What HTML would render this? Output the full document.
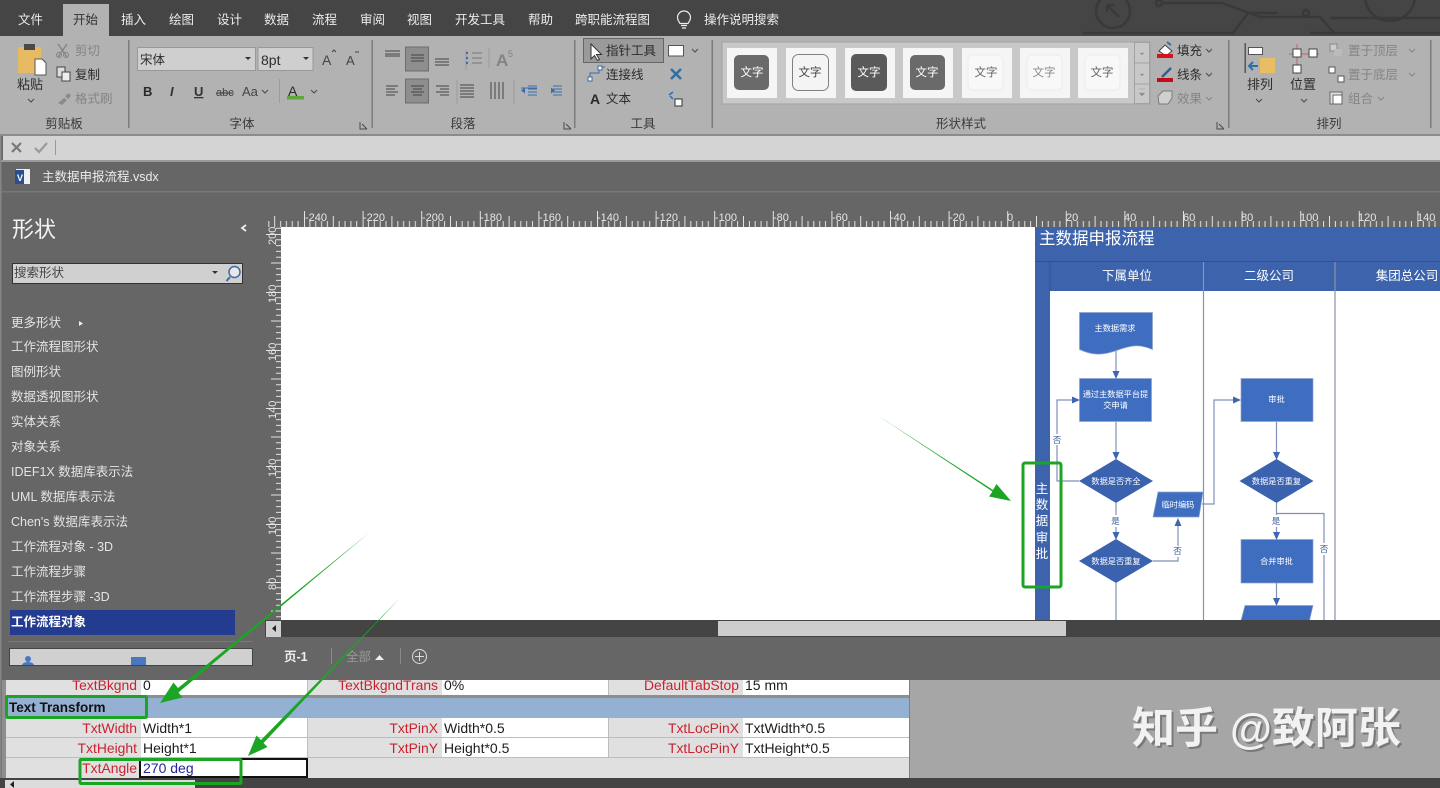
<!DOCTYPE html>
<html lang="zh">
<head>
<meta charset="utf-8">
<title>主数据申报流程.vsdx</title>
<style>
html,body{margin:0;padding:0;background:#666;width:1440px;height:788px;overflow:hidden}
svg{display:block;filter:blur(.3px)}
text{font-family:"Liberation Sans","Noto Sans CJK SC",sans-serif}
.tab{font-size:12.5px;fill:#ececec}
.rb{font-size:12.5px;fill:#2c2c2c}
.dis{font-size:12.5px;fill:#858585}
.grp{font-size:12.5px;fill:#3a3a3a;text-anchor:middle}
.side{font-size:12.5px;fill:#e4e4e4}
.rul{font-size:11px;fill:#e8e8e8}
.lab{font-size:13.9px;fill:#c9232f;text-anchor:end}
.val{font-size:14px;fill:#1c1c1c}
.fc{font-size:8.2px;fill:#fff;text-anchor:middle}
.yn{font-size:8.5px;fill:#3f5f9f;text-anchor:middle}
.hd{font-size:12.5px;fill:#fff;text-anchor:middle}
.st{font-size:11.5px;text-anchor:middle}
.ic{fill:none;stroke:#4a4a4a;stroke-width:1}
</style>
</head>
<body>
<svg width="1440" height="788" viewBox="0 0 1440 788" xmlns="http://www.w3.org/2000/svg">
<defs>
<pattern id="rh" x="304" y="210" width="58.6" height="17" patternUnits="userSpaceOnUse">
<path d="M.5 1V17M5.9 11V17M11.7 11V17M17.6 11V17M23.4 11V17M29.3 6V17M35.2 11V17M41 11V17M46.9 11V17M52.7 11V17" stroke="#e2e2e2" stroke-width="1" fill="none"/>
</pattern>
<pattern id="rv" x="265" y="234" width="17" height="58" patternUnits="userSpaceOnUse">
<path d="M1 .5H17M11 5.8H17M11 11.6H17M11 17.4H17M11 23.2H17M6 29H17M11 34.8H17M11 40.6H17M11 46.4H17M11 52.2H17" stroke="#e2e2e2" stroke-width="1" fill="none"/>
</pattern>
</defs>

<!-- backgrounds -->
<rect width="1440" height="788" fill="#666"/>
<rect width="1440" height="36" fill="#454545"/>
<!-- circuit decoration -->
<g fill="none" stroke="#393939" stroke-width="2.5">
<circle cx="1113" cy="11" r="17"/><path d="M1107 5l12 12M1107 5h7M1107 5v7"/>
<circle cx="1159" cy="3" r="3"/><path d="M1162 3h60l38 14h60l15 17"/>
<path d="M1083 33h150l15-20h30"/><circle cx="1306" cy="13" r="3"/>
<circle cx="1390" cy="-4" r="25"/><path d="M1330 18h110M1310 33h130"/>
</g>
<rect x="0" y="36" width="1440" height="99" fill="#b2b2b2"/>
<rect x="63" y="4" width="46" height="32" fill="#b2b2b2"/>
<rect y="134" width="1440" height="2" fill="#8c8c8c"/>
<rect x="3" y="136" width="1437" height="24" fill="#d4d4d4"/>
<rect y="160" width="1440" height="2" fill="#999"/>
<rect y="191" width="1440" height="1.500" fill="#787878"/>
<rect x="0" y="136" width="1.5" height="652" fill="#858585"/>

<!-- tabs -->
<text class="tab" x="18" y="24">文件</text>
<text class="tab" x="73" y="24" style="fill:#333">开始</text>
<text class="tab" x="121" y="24">插入</text>
<text class="tab" x="169" y="24">绘图</text>
<text class="tab" x="217" y="24">设计</text>
<text class="tab" x="264" y="24">数据</text>
<text class="tab" x="312" y="24">流程</text>
<text class="tab" x="360" y="24">审阅</text>
<text class="tab" x="407" y="24">视图</text>
<text class="tab" x="455" y="24">开发工具</text>
<text class="tab" x="528" y="24">帮助</text>
<text class="tab" x="575" y="24">跨职能流程图</text>
<path d="M680 23.5c-1-2-2.500-3-2.500-6a6.500 6.500 0 0 1 13 0c0 3-1.500 4-2.500 6zM681 25.500h6M682 28h4" fill="none" stroke="#eee" stroke-width="1.200"/>
<text class="tab" x="704" y="24">操作说明搜索</text>

<!-- ribbon separators -->
<g fill="#7c7c7c">
<rect x="128" y="40" width="1.500" height="88"/><rect x="371.500" y="40" width="1.500" height="88"/>
<rect x="574" y="40" width="1.500" height="88"/><rect x="711.500" y="40" width="1.500" height="88"/>
<rect x="1228" y="40" width="1.500" height="88"/><rect x="1430" y="40" width="1.500" height="88"/>
</g>
<text class="grp" x="64" y="128">剪贴板</text>
<text class="grp" x="242" y="128">字体</text>
<text class="grp" x="463" y="128">段落</text>
<text class="grp" x="643" y="128">工具</text>
<text class="grp" x="961" y="128">形状样式</text>
<text class="grp" x="1329" y="128">排列</text>
<g class="ic"><path d="M360 122v7h7M362 124l5 5"/><path d="M564 122v7h7M566 124l5 5" /><path d="M1217 122v7h7M1219 124l5 5"/></g>

<!-- clipboard -->
<rect x="18" y="47" width="23" height="26" fill="#e6bb64"/>
<rect x="24" y="44" width="11" height="6" fill="#4a4a4a"/>
<path d="M35 59h7l4 4v12H35z" fill="#fff" stroke="#555"/>
<text class="rb" x="17" y="89" style="font-size:13px">粘贴</text>
<path d="M28 99l3 3 3-3" class="ic"/>
<path d="M58 44l9 13M67 44l-9 13" stroke="#858585" stroke-width="1.500" fill="none"/><circle cx="59" cy="55" r="2.500" fill="none" stroke="#858585"/><circle cx="66" cy="55" r="2.500" fill="none" stroke="#858585"/>
<text class="dis" x="75" y="55">剪切</text>
<rect x="57" y="67" width="8" height="10" fill="#ddd" stroke="#444"/><rect x="62" y="72" width="8" height="9" fill="#eee" stroke="#444"/>
<text class="rb" x="75" y="79">复制</text>
<path d="M58 103l6-5 3 2-5 5zM65 96l4-3 2 3-3 3z" fill="#8a8a8a"/>
<text class="dis" x="75" y="103">格式刷</text>

<!-- font -->
<rect x="137.500" y="47.500" width="118" height="23" fill="#cfcfcf" stroke="#999"/>
<rect x="258" y="47.500" width="55" height="23" fill="#cfcfcf" stroke="#999"/>
<text class="rb" x="140" y="64">宋体</text>
<text class="rb" x="261" y="65" style="font-size:14px">8pt</text>
<path d="M245 57h6l-3 3zM303 57h6l-3 3z" fill="#333"/>
<text x="322" y="65" style="font-size:14px;fill:#444">A</text><path d="M332 52l2-2 2 2" fill="none" stroke="#444"/>
<text x="346" y="65" style="font-size:13px;fill:#444">A</text><path d="M355 52h4" stroke="#444"/>
<text x="143" y="96" style="font-size:13px;font-weight:bold;fill:#2a2a2a">B</text>
<text x="170" y="96" style="font-size:13px;font-style:italic;font-weight:bold;fill:#333">I</text>
<text x="194" y="96" style="font-size:13px;font-weight:bold;fill:#333;text-decoration:underline">U</text>
<text x="216" y="96" style="font-size:11px;fill:#444;text-decoration:line-through">abc</text>
<text x="242" y="96" style="font-size:13px;fill:#444">Aa</text>
<path d="M262 90l3 3 3-3M311 90l3 3 3-3" class="ic"/>
<rect x="279" y="79" width="1" height="24" fill="#9c9c9c"/>
<text x="288" y="96" style="font-size:14px;fill:#2a2a2a">A</text>
<rect x="287" y="96" width="17" height="3.500" fill="#5ea83b"/>

<!-- paragraph -->
<rect x="405.500" y="47" width="23" height="24" fill="#8e8e8e" stroke="#6c6c6c"/>
<rect x="405.500" y="79" width="23" height="24" fill="#8e8e8e" stroke="#6c6c6c"/>
<g stroke="#444" stroke-width="1" fill="none">
<path d="M385 51h15M385 54h15M385 56h15"/>
<path d="M411 55h13M411 58h13M411 61h13"/>
<path d="M435 59h14M435 62h14M435 65h14"/>
<path d="M386 86h12M386 89h9M386 92h12M386 95h9"/>
<path d="M411 86h13M413 89h9M411 92h13M413 95h9"/>
<path d="M436 86h13M440 89h9M436 92h13M440 95h9"/>
<path d="M460 85h14M460 88h14M460 91h14M460 94h14M460 97h14"/>
<path d="M472 53h10M472 58h10M472 63h10" stroke="#777"/>
<path d="M491 82v17M495 82v17M499 82v17M503 82v17"/>
<path d="M528 86h9M528 89h9M528 92h9M528 95h9M521 88h16" stroke="#3b6ea8"/>
<path d="M553 86h9M553 89h9M553 92h9M553 95h9" stroke="#3b6ea8"/>
<path d="M466 50v20M489 48v20M457 80v24M514 80v24" stroke="#9c9c9c"/>
</g>
<g fill="#3b6ea8"><circle cx="467" cy="53" r="1.200"/><circle cx="467" cy="58" r="1.200"/><circle cx="467" cy="63" r="1.200"/><path d="M521 90.500l4-3v6zM551 87.500l4 3-4 3z"/></g>
<text x="496" y="66" style="font-size:17px;font-weight:bold;fill:#838383">A</text>
<text x="508" y="57" style="font-size:9px;fill:#838383">5</text>

<!-- tools -->
<rect x="583.500" y="38.500" width="80" height="24" fill="#9a9a9a" stroke="#666"/>
<path d="M591 44v15l3.500-3.500 3 5 2-1-3-5h5z" fill="#fff" stroke="#333"/>
<text class="rb" x="606" y="55">指针工具</text>
<rect x="668.500" y="45.500" width="15" height="10.500" fill="#fff" stroke="#555"/>
<path d="M692 49l3 3 3-3" class="ic"/>
<path d="M590 77v-4h9v-6h6" fill="none" stroke="#3a6ba5" stroke-width="1"/><rect x="588" y="77" width="4" height="4" fill="#fff" stroke="#3a6ba5"/><rect x="598" y="66" width="4" height="4" fill="#fff" stroke="#3a6ba5"/>
<text class="rb" x="606" y="79">连接线</text>
<path d="M671 69l10 10M681 69l-10 10" stroke="#2f6ea8" stroke-width="2.500"/>
<text x="590" y="104" style="font-size:14px;font-weight:bold;fill:#2a2a2a">A</text>
<text class="rb" x="606" y="103">文本</text>
<path d="M669 95l4-3M673 99l-3-3" stroke="#2f6ea8" stroke-width="1.500" fill="none"/><rect x="675" y="99" width="7" height="7" fill="#fff" stroke="#333"/>

<!-- gallery -->
<rect x="722" y="42" width="428" height="62" fill="#c8c8c8" stroke="#a2a2a2"/>
<rect x="1134.500" y="42.500" width="15" height="61" fill="#c8c8c8" stroke="#a2a2a2"/>
<path d="M1135 63h14M1135 84h14" stroke="#a2a2a2"/>
<path d="M1140 53h4l-2 2zM1140 74h4l-2 2zM1139 93h6l-3 3zM1139 89h6" fill="#888" stroke="#999" stroke-width=".5"/>
<g fill="#f5f5f5">
<rect x="727" y="48" width="50" height="50"/><rect x="786" y="48" width="50" height="50"/><rect x="845" y="48" width="50" height="50"/><rect x="903" y="48" width="50" height="50"/><rect x="962" y="48" width="50" height="50"/><rect x="1020" y="48" width="50" height="50"/><rect x="1078" y="48" width="50" height="50"/>
</g>
<rect x="734" y="55" width="35" height="35" rx="5" fill="#6a6a6a"/>
<rect x="792.500" y="54.500" width="36" height="36" rx="6" fill="#f4f4f4" stroke="#808080"/>
<rect x="851" y="54" width="36" height="37" rx="5" fill="#5a5a5a"/>
<rect x="910" y="55" width="35" height="35" rx="5" fill="#6a6a6a"/>
<g fill="#f8f8f8" stroke="#ececec"><rect x="968" y="55" width="35" height="35" rx="5"/><rect x="1027" y="55" width="35" height="35" rx="5"/><rect x="1085" y="55" width="35" height="35" rx="5"/></g>
<text class="st" x="752" y="76" fill="#fff">文字</text>
<text class="st" x="810" y="76" fill="#444">文字</text>
<text class="st" x="869" y="76" fill="#fff">文字</text>
<text class="st" x="927" y="76" fill="#fff">文字</text>
<text class="st" x="986" y="76" fill="#666">文字</text>
<text class="st" x="1044" y="76" fill="#8c8c8c">文字</text>
<text class="st" x="1102" y="76" fill="#666">文字</text>

<!-- fill line effect -->
<path d="M1159 51l6-6 7 6-6 5z" fill="#fff" stroke="#444"/><path d="M1167 42l4 3" stroke="#2f6ea8" stroke-width="2"/>
<rect x="1157" y="54" width="16" height="4" fill="#d8101a"/>
<text class="rb" x="1177" y="55">填充</text><path d="M1206 49l3 3 3-3" class="ic"/>
<path d="M1162 77l9-9" stroke="#2f5f9a" stroke-width="2.500"/>
<rect x="1157" y="78" width="16" height="4" fill="#c00d18"/>
<text class="rb" x="1177" y="79">线条</text><path d="M1206 73l3 3 3-3" class="ic"/>
<path d="M1158 96l5-5h9v7l-4 6h-9z" fill="#d0d0d0" stroke="#7a7a7a"/>
<text class="dis" x="1177" y="103">效果</text><path d="M1206 97l3 3 3-3" class="ic" style="stroke:#858585"/>

<!-- arrange -->
<rect x="1244.500" y="43" width="1.500" height="30" fill="#555"/>
<rect x="1248.500" y="47.500" width="14" height="7" fill="#fff" stroke="#555"/>
<rect x="1260" y="58" width="15" height="15" fill="#e9bd62"/>
<path d="M1258 66h-9M1253 62l-4 4 4 4" stroke="#2f6ea8" stroke-width="2" fill="none"/>
<text class="rb" x="1247" y="89" style="font-size:13px">排列</text>
<path d="M1256 99l3 3 3-3" class="ic"/>
<path d="M1289 54h30M1297 44v30" stroke="#b96a60" fill="none"/>
<rect x="1293" y="49" width="8" height="8" fill="#fff" stroke="#444"/><rect x="1309" y="49" width="8" height="8" fill="#fff" stroke="#444"/><rect x="1293" y="65" width="8" height="8" fill="#fff" stroke="#444"/>
<text class="rb" x="1290" y="89" style="font-size:13px">位置</text>
<path d="M1301 99l3 3 3-3" class="ic"/>
<rect x="1330" y="44" width="7" height="7" fill="#ccc" stroke="#888"/><rect x="1334" y="49" width="8" height="7" fill="#bbb"/>
<text class="dis" x="1348" y="55">置于顶层</text><path d="M1409 49l3 3 3-3" class="ic" style="stroke:#858585"/>
<rect x="1329" y="67" width="6" height="6" fill="#fff" stroke="#555"/><rect x="1338" y="76" width="6" height="6" fill="#fff" stroke="#555"/>
<text class="dis" x="1348" y="79">置于底层</text><path d="M1409 73l3 3 3-3" class="ic" style="stroke:#858585"/>
<rect x="1330" y="92" width="12" height="12" fill="#e0e0e0" stroke="#666"/><rect x="1333" y="95" width="9" height="9" fill="#fff" stroke="#666"/>
<text class="dis" x="1348" y="103">组合</text><path d="M1378 97l3 3 3-3" class="ic" style="stroke:#858585"/>

<!-- formula bar -->
<path d="M12 143l9 9M21 143l-9 9" stroke="#777" stroke-width="2.200"/>
<path d="M35 148l4 4 8-9" stroke="#999" stroke-width="2.200" fill="none"/>
<rect x="55" y="140" width="1" height="15" fill="#999"/>

<!-- doc title -->
<rect x="16" y="169" width="14" height="15" fill="#f0f0f0"/><rect x="15" y="170" width="9" height="14" fill="#2a4f8f"/>
<text x="17" y="181" style="font-size:9px;fill:#fff;font-weight:bold">V</text>
<text x="42" y="181" style="font-size:12.5px;fill:#ececec">主数据申报流程.vsdx</text>

<!-- sidebar -->
<text x="12" y="237" style="font-size:22px;fill:#f2f2f2">形状</text>
<path d="M246 225l-4 3 4 3" stroke="#eee" stroke-width="1.800" fill="none"/>
<rect x="12.500" y="263.500" width="230" height="20" fill="#d0d0d0" stroke="#333"/>
<text x="14" y="277" style="font-size:12.500px;fill:#444">搜索形状</text>
<path d="M212 271h6l-3 3z" fill="#333"/>
<circle cx="234.500" cy="272" r="5.500" fill="#e8e8e8" stroke="#3a6ba5" stroke-width="1.500"/><path d="M230 277l-3.500 4" stroke="#3a6ba5" stroke-width="2"/>
<text class="side" x="11" y="327">更多形状</text><path d="M79 321l4 2.500-4 2.500z" fill="#eee"/>
<text class="side" x="11" y="351">工作流程图形状</text>
<text class="side" x="11" y="376">图例形状</text>
<text class="side" x="11" y="401">数据透视图形状</text>
<text class="side" x="11" y="426">实体关系</text>
<text class="side" x="11" y="451">对象关系</text>
<text class="side" x="11" y="476">IDEF1X 数据库表示法</text>
<text class="side" x="11" y="501">UML 数据库表示法</text>
<text class="side" x="11" y="526">Chen's 数据库表示法</text>
<text class="side" x="11" y="551">工作流程对象 - 3D</text>
<text class="side" x="11" y="576">工作流程步骤</text>
<text class="side" x="11" y="601">工作流程步骤 -3D</text>
<rect x="10" y="610" width="225" height="25" fill="#243c90"/>
<text x="11" y="626" style="font-size:12.500px;font-weight:bold;fill:#fff">工作流程对象</text>
<rect x="8" y="641" width="245" height="1" fill="#7a7a7a"/>
<rect x="9.500" y="648.500" width="243" height="17" fill="#d0d0d0" stroke="#444"/>
<circle cx="28" cy="659" r="3" fill="#4a78c0"/><path d="M22 665c1-4 11-4 12 0z" fill="#4a78c0"/>
<rect x="131" y="657" width="15" height="8" fill="#4a78c0"/>

<!-- rulers -->
<rect x="265" y="210" width="1175" height="17" fill="#666"/>
<rect x="265" y="210" width="1175" height="17" fill="url(#rh)"/>
<rect x="265" y="227" width="16" height="393" fill="#666"/>
<rect x="265" y="227" width="16" height="393" fill="url(#rv)"/>
<g class="rul">
<text class="rul" x="305" y="221">-240</text><text class="rul" x="363" y="221">-220</text><text class="rul" x="422" y="221">-200</text><text class="rul" x="480" y="221">-180</text><text class="rul" x="539" y="221">-160</text><text class="rul" x="597" y="221">-140</text><text class="rul" x="656" y="221">-120</text><text class="rul" x="715" y="221">-100</text><text class="rul" x="773" y="221">-80</text><text class="rul" x="832" y="221">-60</text><text class="rul" x="890" y="221">-40</text><text class="rul" x="949" y="221">-20</text><text class="rul" x="1007" y="221">0</text><text class="rul" x="1066" y="221">20</text><text class="rul" x="1124" y="221">40</text><text class="rul" x="1183" y="221">60</text><text class="rul" x="1241" y="221">80</text><text class="rul" x="1300" y="221">100</text><text class="rul" x="1358" y="221">120</text><text class="rul" x="1417" y="221">140</text>
<text class="rul" transform="translate(276,245) rotate(-90)">200</text>
<text class="rul" transform="translate(276,303) rotate(-90)">180</text>
<text class="rul" transform="translate(276,361) rotate(-90)">160</text>
<text class="rul" transform="translate(276,419) rotate(-90)">140</text>
<text class="rul" transform="translate(276,477) rotate(-90)">120</text>
<text class="rul" transform="translate(276,535) rotate(-90)">100</text>
<text class="rul" transform="translate(276,590) rotate(-90)">80</text>
</g>

<!-- canvas -->
<rect x="281" y="227" width="1159" height="393" fill="#fff"/>
<rect x="1035" y="227" width="405" height="64" fill="#3c63ac"/>
<rect x="1035" y="227" width="15" height="393" fill="#3c63ac"/>
<rect x="1035" y="261" width="405" height="1" fill="#33528f"/>
<rect x="1049.500" y="262" width="1" height="29" fill="#33528f"/>
<path d="M1203.500 262V620M1335 262V620" stroke="#8a94a6" stroke-width="1.200"/>
<text x="1039" y="244" style="font-size:16.500px;fill:#fff">主数据申报流程</text>
<text class="hd" x="1127" y="280">下属单位</text>
<text class="hd" x="1269" y="280">二级公司</text>
<text class="hd" x="1407" y="280">集团总公司</text>

<g fill="#3f6ec0" stroke="#8fa3c9" stroke-width=".7">
<path d="M1079.500 312.500h73v37c-14-6-22-4-36 1s-24 5-37-1z"/>
<rect x="1079.500" y="378.500" width="72" height="43"/>
<rect x="1241" y="378.500" width="72" height="43"/>
<rect x="1241" y="539.500" width="72" height="43.500"/>
<path d="M1158 492h45l-4 25h-46z"/>
<path d="M1245 605.500h68l-3.500 15h-68.500z"/>
</g>
<g fill="#3a62ae">
<path d="M1116 459l37 22-37 22-37-22z"/>
<path d="M1116 539l37 22-37 22-37-22z"/>
<path d="M1276.500 459l37 22-37 22-37-22z"/>
</g>
<g fill="none" stroke="#7f91b8" stroke-width="1.200">
<path d="M1116 351V372M1116 422V453M1116 503V515M1116 527V533M1116 583V620"/>
<path d="M1079 481H1057V445M1057 434V400H1073"/>
<path d="M1153 561H1178V557M1178 546V525"/>
<path d="M1202 504H1214V400H1234"/>
<path d="M1276.500 422V453M1276.500 503V515M1276.500 527V533M1276.500 583V600"/>
<path d="M1276.500 513.500H1324V543M1324 555V620"/>
</g>
<g fill="#3f66b0">
<path d="M1112.500 371h7l-3.500 8zM1112.500 452h7l-3.500 8zM1112.500 532h7l-3.500 8z"/>
<path d="M1072 396.500v7l8-3.500zM1233 396.500v7l8-3.500z"/>
<path d="M1174.500 526h7l-3.500-8z"/>
<path d="M1273 452h7l-3.500 8zM1273 532h7l-3.500 8zM1273 598h7l-3.500 8z"/>
</g>
<text class="fc" x="1115" y="331">主数据需求</text>
<text class="fc" x="1115.500" y="397">通过主数据平台提</text>
<text class="fc" x="1115.500" y="408">交申请</text>
<text class="fc" x="1276.500" y="402">审批</text>
<text class="fc" x="1116" y="484">数据是否齐全</text>
<text class="fc" x="1116" y="564">数据是否重复</text>
<text class="fc" x="1276.500" y="484">数据是否重复</text>
<text class="fc" x="1178" y="507.500">临时编码</text>
<text class="fc" x="1276.500" y="564">合并审批</text>
<text class="yn" x="1057" y="443">否</text>
<text class="yn" x="1115.500" y="524">是</text>
<text class="yn" x="1177.500" y="554">否</text>
<text class="yn" x="1276" y="524">是</text>
<text class="yn" x="1324" y="552">否</text>
<g style="font-size:12.500px" fill="#fff" text-anchor="middle">
<text x="1042" y="493">主</text><text x="1042" y="509">数</text><text x="1042" y="525">据</text><text x="1042" y="542">审</text><text x="1042" y="558">批</text>
</g>

<!-- h scrollbar -->
<rect x="265" y="620" width="1175" height="17" fill="#444"/>
<rect x="266" y="621" width="15" height="16" fill="#d0d0d0"/>
<path d="M276 625v7l-4-3.500z" fill="#222"/>
<rect x="718" y="621" width="348" height="15" fill="#cdcdcd"/>

<!-- page tabs -->
<text x="284" y="661" style="font-size:12.500px;font-weight:bold;fill:#eee">页-1</text>
<rect x="331" y="648" width="1" height="16" fill="#8a8a8a"/>
<text x="346" y="661" style="font-size:12.500px;fill:#999">全部</text>
<path d="M375 660l4.500-5 4.500 5z" fill="#eee"/>
<rect x="400" y="648" width="1" height="16" fill="#8a8a8a"/>
<circle cx="419.500" cy="656.500" r="7" fill="none" stroke="#ddd"/><path d="M415 656.500h9M419.500 652v9" stroke="#ddd"/>

<!-- shapesheet -->
<rect x="910" y="680" width="530" height="98" fill="#a6a6a6"/>
<rect x="2" y="680" width="908" height="98" fill="#e0e0e0"/>
<rect x="2" y="680" width="4" height="98" fill="#8f8f8f"/>
<g fill="#fff">
<rect x="141" y="680" width="166" height="15"/><rect x="442" y="680" width="166" height="15"/><rect x="743" y="680" width="166" height="15"/>
<rect x="141" y="718" width="166" height="19"/><rect x="442" y="718" width="166" height="19"/><rect x="743" y="718" width="166" height="19"/>
<rect x="141" y="738" width="166" height="19"/><rect x="442" y="738" width="166" height="19"/><rect x="743" y="738" width="166" height="19"/>
</g>
<path d="M6 737.500H910M6 757.500H910M307.500 680V758M608.500 680V758" stroke="#bdbdbd" stroke-width="1"/>
<rect x="6" y="695" width="904" height="3" fill="#8e8e8e"/>
<rect x="6" y="698" width="904" height="20" fill="#94b0d3"/>
<rect x="909" y="680" width="1" height="98" fill="#808080"/>
<text x="9" y="712" style="font-size:13.500px;font-weight:bold;fill:#111">Text Transform</text>
<text class="lab" x="137" y="690">TextBkgnd</text><text class="val" x="143" y="690">0</text>
<text class="lab" x="438" y="690">TextBkgndTrans</text><text class="val" x="444" y="690">0%</text>
<text class="lab" x="739" y="690">DefaultTabStop</text><text class="val" x="745" y="690">15 mm</text>
<text class="lab" x="137" y="733">TxtWidth</text><text class="val" x="143" y="733">Width*1</text>
<text class="lab" x="438" y="733">TxtPinX</text><text class="val" x="444" y="733">Width*0.5</text>
<text class="lab" x="739" y="733">TxtLocPinX</text><text class="val" x="745" y="733">TxtWidth*0.5</text>
<text class="lab" x="137" y="753">TxtHeight</text><text class="val" x="143" y="753">Height*1</text>
<text class="lab" x="438" y="753">TxtPinY</text><text class="val" x="444" y="753">Height*0.5</text>
<text class="lab" x="739" y="753">TxtLocPinY</text><text class="val" x="745" y="753">TxtHeight*0.5</text>
<text class="lab" x="137" y="773">TxtAngle</text>
<rect x="140" y="759" width="167" height="18" fill="#fff" stroke="#111" stroke-width="2"/>
<text class="val" x="143" y="773" style="fill:#23239e">270 deg</text>

<!-- bottom scrollbar -->
<rect y="778" width="1440" height="10" fill="#444"/>
<rect x="5" y="780" width="190" height="8" fill="#dcdcdc"/>
<path d="M14 781v7l-4-3.500z" fill="#222"/>

<!-- watermark -->
<text x="1132" y="743" style="font-size:43px;font-weight:bold;fill:#555;opacity:.55" transform="translate(2,2)">知乎 @致阿张</text>
<text x="1132" y="743" style="font-size:43px;font-weight:bold;fill:#f2f2f2">知乎 @致阿张</text>

<!-- green annotations -->
<g fill="none" stroke="#1ca524" stroke-width="3">
<rect x="1023" y="463" width="38" height="124" rx="2"/>
<rect x="6.500" y="696.500" width="140" height="21" rx="1"/>
<rect x="80" y="759.500" width="161" height="24" rx="1"/>
</g>
<g fill="#1ca524">
<path d="M877 415L993 490l3.500-6 14.500 17-22-4.500 3.500-5z"/>
<path d="M370 532L178 688l-4.500-5.500L160 703l22.500-5.500-4-5 3.500-3z"/>
<path d="M400 598L261 740l-4.500-4.500L248 756l19.500-9-4-4z"/>
</g>
</svg>
</body>
</html>
